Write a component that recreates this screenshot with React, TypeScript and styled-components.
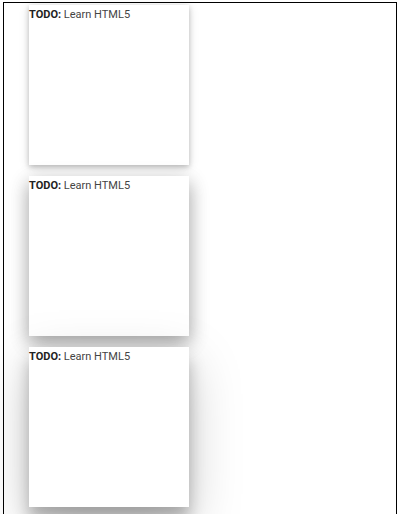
import styled, { createGlobalStyle } from 'styled-components';

const GlobalStyle = createGlobalStyle`
  html, body {
    margin: 0;
    padding: 0;
    background: #fff;
    overflow: hidden;
  }
  body {
    font-family: Roboto, "Liberation Sans", Arial, sans-serif;
  }
`;

const Frame = styled.div`
  margin: 2px 0 0 3px;
  width: 394px;
  height: 530px;
  border: 1px solid #000;
  padding: 2px 0 0 25px;
  box-sizing: border-box;
  display: flex;
  flex-direction: column;
  gap: 11px;
`;

const shadows: Record<number, string> = {
  1: '0 2px 5px 0 rgba(0, 0, 0, 0.2), 0 2px 10px 0 rgba(0, 0, 0, 0.14)',
  2: '0 8px 17px 0 rgba(0, 0, 0, 0.22), 0 6px 20px 0 rgba(0, 0, 0, 0.19)',
  3: '0 12px 15px 0 rgba(0, 0, 0, 0.26), 0 17px 50px 0 rgba(0, 0, 0, 0.21)',
};

const Note = styled.div<{ $depth: number }>`
  flex: none;
  width: 160px;
  height: 160px;
  background: #fff;
  box-shadow: ${(p) => shadows[p.$depth]};
  font-size: 11px;
  line-height: 14px;
  color: #444;
  padding-top: 3px;
  box-sizing: border-box;
`;

const Label = styled.b`
  color: #222;
  font-weight: 700;
`;

const notes = [
  { id: 1, depth: 1, text: 'Learn HTML5' },
  { id: 2, depth: 2, text: 'Learn HTML5' },
  { id: 3, depth: 3, text: 'Learn HTML5' },
];

export default function App() {
  return (
    <>
      <GlobalStyle />
      <Frame>
        {notes.map((n) => (
          <Note key={n.id} $depth={n.depth}>
            <Label>TODO:</Label> {n.text}
          </Note>
        ))}
      </Frame>
    </>
  );
}
